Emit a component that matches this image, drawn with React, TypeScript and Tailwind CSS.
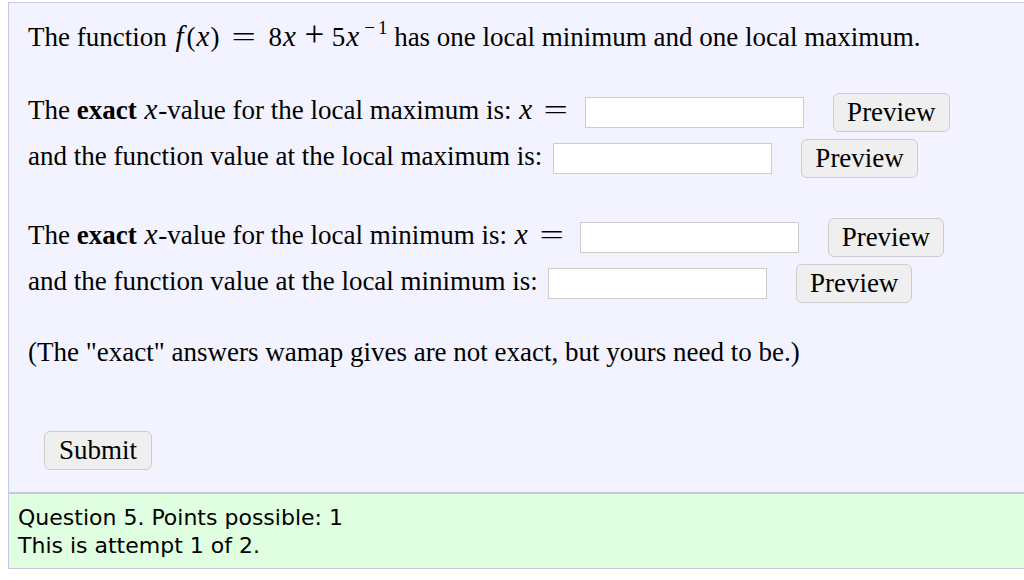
import React from 'react';

const serif = "font-['Liberation_Serif','Times_New_Roman',serif]";

function MathX() {
  return <i className="mx-[1px] text-[29px]">x</i>;
}

function Eq({ className = '' }: { className?: string }) {
  return (
    <span className={`inline-block w-[25px] text-center ${className}`}>
      <span className="inline-block scale-x-[1.6]">=</span>
    </span>
  );
}

function Preview() {
  return (
    <button className="ml-[29px] inline-block h-[39px] align-middle rounded-[6px] border border-[#cccccc] bg-[#efefef] px-[13px] text-[27px] leading-none text-black">
      Preview
    </button>
  );
}

function AnswerBox({ gap }: { gap: string }) {
  return <input type="text" className={`${gap} inline-block h-[31px] w-[219px] align-middle border border-[#cccccc] bg-white`} />;
}

export default function App() {
  return (
    <div className="w-full overflow-hidden bg-white pl-[8px] pt-[2px] pb-[12px]">
      <div className="w-[1040px] border border-[#c6c6e6]">
        {/* Question body */}
        <div className={`bg-[#f3f3ff] pl-[19px] pt-[18px] pb-[21px] text-[27px] text-black ${serif}`}>
          <div className="h-[30px] leading-[30px] whitespace-nowrap">
            The function <i className="ml-[2px] text-[29px]">f</i>
            <span className="ml-[3px]">(</span>
            <MathX />
            <span>)</span>
            <Eq className="mx-[12px]" />
            <span>8</span>
            <MathX />
            <span className="mx-[6px] inline-block h-[20px] w-[23px] text-center text-[35px] leading-[20px]">+</span>
            <span>5</span>
            <MathX />
            <span className="relative -top-[12px] ml-[4px] text-[19px] leading-none">
              <span className="mr-[3px]">−</span>1
            </span>{' '}
            has one local minimum and one local maximum.
          </div>

          <div className="mt-[35px] h-[47px] leading-[47px] whitespace-nowrap">
            The <b>exact</b> <MathX />-value for the local maximum is: <MathX />
            <Eq className="ml-[10px]" />
            <AnswerBox gap="ml-[17px]" />
            <Preview />
          </div>
          <div className="h-[47px] leading-[47px] whitespace-nowrap">
            and the function value at the local maximum is:
            <AnswerBox gap="ml-[11px]" />
            <Preview />
          </div>

          <div className="mt-[31px] h-[47px] leading-[47px] whitespace-nowrap">
            The <b>exact</b> <MathX />-value for the local minimum is: <MathX />
            <Eq className="ml-[10px]" />
            <AnswerBox gap="ml-[16px]" />
            <Preview />
          </div>
          <div className="h-[47px] leading-[47px] whitespace-nowrap">
            and the function value at the local minimum is:
            <AnswerBox gap="ml-[10px]" />
            <Preview />
          </div>

          <p className="mt-[32px] h-[30px] leading-[30px]">
            (The "exact" answers wamap gives are not exact, but yours need to be.)
          </p>

          <button className="ml-[16px] mt-[64px] h-[39px] rounded-[6px] border border-[#cccccc] bg-[#efefef] px-[14px] text-[27px] leading-none text-black">
            Submit
          </button>
        </div>

        {/* Question info */}
        <div className="border-t-2 border-[#c6c6e6] bg-[#e0ffe0] pl-[9px] pt-[10px] pb-[8px] font-['DejaVu_Sans','Verdana',sans-serif] text-[22px] leading-[28px] text-black">
          <div>Question 5. Points possible: 1</div>
          <div>This is attempt 1 of 2.</div>
        </div>
      </div>
    </div>
  );
}
